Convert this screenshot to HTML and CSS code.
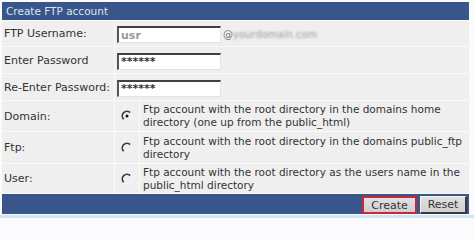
FILE: index.html
```html
<!DOCTYPE html>
<html>
<head>
<meta charset="utf-8">
<link rel="stylesheet" href="styles.css">
</head>
<body>
<table class="ftp">
  <colgroup><col class="c1"><col class="c2"><col class="c3"></colgroup>
  <tr class="head"><td colspan="3">Create FTP account</td></tr>
  <tr class="r1">
    <td class="lbl">FTP Username:</td>
    <td colspan="2" class="val"><input class="field fuzzy" type="text" value="usr"><span class="at">@</span><span class="dom">yourdomain.com</span></td>
  </tr>
  <tr class="r2">
    <td class="lbl">Enter Password</td>
    <td colspan="2" class="val"><input class="field" type="text" value="******"></td>
  </tr>
  <tr class="r3">
    <td class="lbl">Re-Enter Password:</td>
    <td colspan="2" class="val"><input class="field" type="text" value="******"></td>
  </tr>
  <tr class="r4">
    <td class="lbl">Domain:</td>
    <td class="radio"><svg class="rb" width="12" height="12" viewBox="0 0 12 12"><path d="M9.3 2.7 A4.6 4.6 0 0 0 2.7 9.3" fill="none" stroke="#3a3a3a" stroke-width="1.7"/><path d="M9.3 2.7 A4.6 4.6 0 0 1 2.7 9.3" fill="none" stroke="#f6f6f6" stroke-width="1.2"/><circle cx="6" cy="6" r="1.5" fill="#111"/></svg></td>
    <td class="desc">Ftp account with the root directory in the domains home<br>directory (one up from the public_html)</td>
  </tr>
  <tr class="r5">
    <td class="lbl">Ftp:</td>
    <td class="radio"><svg class="rb" width="12" height="12" viewBox="0 0 12 12"><path d="M9.3 2.7 A4.6 4.6 0 0 0 2.7 9.3" fill="none" stroke="#3a3a3a" stroke-width="1.7"/><path d="M9.3 2.7 A4.6 4.6 0 0 1 2.7 9.3" fill="none" stroke="#f6f6f6" stroke-width="1.2"/></svg></td>
    <td class="desc">Ftp account with the root directory in the domains public_ftp<br>directory</td>
  </tr>
  <tr class="r6">
    <td class="lbl">User:</td>
    <td class="radio"><svg class="rb" width="12" height="12" viewBox="0 0 12 12"><path d="M9.3 2.7 A4.6 4.6 0 0 0 2.7 9.3" fill="none" stroke="#3a3a3a" stroke-width="1.7"/><path d="M9.3 2.7 A4.6 4.6 0 0 1 2.7 9.3" fill="none" stroke="#f6f6f6" stroke-width="1.2"/></svg></td>
    <td class="desc">Ftp account with the root directory as the users name in the<br>public_html directory</td>
  </tr>
  <tr class="foot">
    <td colspan="3"><div class="btns"><button class="btn create" type="button">Create</button><button class="btn" type="button">Reset</button></div></td>
  </tr>
</table>
<div class="strip"></div>
</body>
</html>
```
FILE: styles.css
```css
html, body {
  margin: 0;
  padding: 0;
  background: #fbfbfd;
}
body {
  font-family: "DejaVu Sans", Verdana, sans-serif;
  color: #2a2a2a;
  width: 474px;
  height: 218px;
  overflow: hidden;
}
.ftp {
  margin: 1px 0 0 1px;
  width: 469px;
  border-collapse: separate;
  border-spacing: 1px;
  table-layout: fixed;
  background: #fafafa;
}
.c1 { width: 112px; }
.c2 { width: 24px; }
.ftp td {
  padding: 0;
  background: #efefef;
  vertical-align: middle;
}
.ftp td.lbl { padding-left: 2px; font-size: 11px; color: #333; white-space: nowrap; }
.ftp td.radio { text-align: center; }
.ftp td.desc { padding-left: 3px; font-size: 10.5px; line-height: 13px; color: #333; white-space: nowrap; }
.head td {
  background: #38568a;
  color: #dfe3f0;
  font-size: 10.5px;
  padding-left: 4px;
  height: 18px;
}
.r1 { height: 25px; }
.r2 { height: 26px; }
.r3 { height: 26px; }
.r4 { height: 30px; }
.r5 { height: 31px; }
.r6 { height: 29px; }
.ftp td.val { padding-left: 2px; white-space: nowrap; }
.field {
  box-sizing: border-box;
  width: 104px;
  height: 17px;
  margin: 0;
  padding: 0 0 0 2px;
  border-style: solid;
  border-width: 2px 1px 1px 2px;
  border-color: #404040 #e4e4e4 #e4e4e4 #555;
  background: #fff;
  font-family: "DejaVu Sans", Verdana, sans-serif;
  font-size: 11px;
  font-weight: bold;
  color: #333;
  vertical-align: middle;
  outline: none;
}
.fuzzy {
  color: #9a9a9a;
  font-weight: bold;
  filter: none;
}
.at {
  margin-left: 2px;
  font-size: 10px;
  color: #777;
  vertical-align: middle;
}
.dom {
  font-size: 10px;
  color: #9a9a9a;
  filter: blur(0.8px);
  display: inline-block;
  vertical-align: middle;
}
.rb { display: block; margin: 0 auto; }
.foot td {
  background: #38568a;
  height: 20px;
}
.btns {
  display: flex;
  justify-content: flex-end;
  gap: 3px;
  padding-right: 2px;
  padding-top: 2px;
}
.btn {
  box-sizing: border-box;
  height: 18px;
  padding: 0;
  font-family: "DejaVu Sans", Verdana, sans-serif;
  font-size: 11px;
  color: #333;
  background: linear-gradient(#e2e2e2, #cfcfcf);
  border-style: solid;
  border-width: 1px 2px 2px 1px;
  border-color: #f4f4f4 #3a3a3a #3a3a3a #f4f4f4;
  width: 47px;
}
.btn.create {
  width: 55px;
  border: 2px solid #c62a3a;
}
.strip {
  height: 4px;
  background: #cfe7f5;
}
```
